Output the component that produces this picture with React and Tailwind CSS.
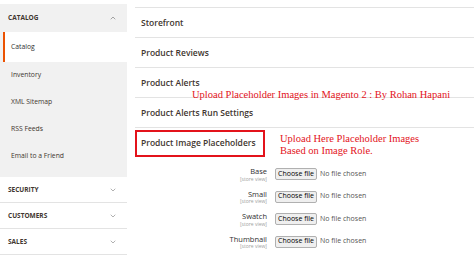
import { ChevronUp, ChevronDown } from "lucide-react";

const subItems = ["Inventory", "XML Sitemap", "RSS Feeds", "Email to a Friend"];
const groups = ["SECURITY", "CUSTOMERS", "SALES"];
const sections = ["Storefront", "Product Reviews", "Product Alerts", "Product Alerts Run Settings"];
const roles = ["Base", "Small", "Swatch", "Thumbnail"];

function App() {
  return (
    <div className="flex w-[474px] h-[261px] overflow-hidden bg-white font-['Open_Sans',sans-serif] text-[#303030] relative">
      {/* sidebar */}
      <aside className="w-[127px] shrink-0 flex flex-col bg-white">
        <div className="h-[4px] bg-white" />
        <div className="bg-[#f1f1f1] pb-[7px]">
          <div className="h-[28px] flex items-center justify-between pl-[8px] pr-[10px]">
            <span className="text-[6.5px] font-bold text-[#41362f]">CATALOG</span>
            <ChevronUp size={8} strokeWidth={2} className="text-[#7a7a7a]" />
          </div>
          <div className="ml-[3px] h-[30px] bg-white border-l-2 border-[#eb5202] flex items-center pl-[6px] text-[6.8px] text-[#303030]">
            Catalog
          </div>
          {subItems.map((s) => (
            <div key={s} className="h-[27px] flex items-center pl-[11px] text-[6.8px] text-[#41362f]">
              {s}
            </div>
          ))}
        </div>
        {groups.map((g) => (
          <div key={g} className="h-[26px] border-b border-[#e3e3e3] flex items-center justify-between pl-[8px] pr-[10px]">
            <span className="text-[6.5px] font-bold text-[#41362f]">{g}</span>
            <ChevronDown size={8} strokeWidth={2} className="text-[#8a8a8a]" />
          </div>
        ))}
      </aside>

      {/* content */}
      <main className="flex-1 ml-[8px] flex flex-col">
        <div className="h-[8px] border-b border-[#e3e3e3]" />
        {sections.map((s) => (
          <div key={s} className="h-[30px] border-b border-[#e3e3e3] flex items-center pl-[6px] pt-[2px] text-[8.5px] font-semibold text-[#41362f]">
            {s}
          </div>
        ))}
        <div className="flex items-start mt-[2px]">
          <div className="w-[130px] h-[27px] border-2 border-[#e3131b] flex items-center pl-[4px] text-[8.5px] font-semibold text-[#41362f]">
            Product Image Placeholders
          </div>
          <div className="ml-[15px] mt-[3px] font-['Liberation_Serif',serif] text-[10.5px] leading-[12px] text-[#e3131b]">
            <div>Upload Here Placeholder Images</div>
            <div>Based on Image Role.</div>
          </div>
        </div>
        <div className="flex flex-col gap-[9px] mt-[11px]">
          {roles.map((r) => (
            <div key={r} className="flex items-start">
              <div className="w-[132px] flex flex-col items-end leading-none">
                <span className="text-[7.5px] text-[#303030]">{r}</span>
                <span className="text-[5px] text-[#a0a0a0] mt-[1px]">[store view]</span>
              </div>
              <div className="ml-[8px] flex items-center">
                <span className="h-[12px] w-[42px] flex items-center justify-center bg-[#efefef] border border-[#b0b0b0] rounded-[2px] text-[7px] text-black">
                  Choose file
                </span>
                <span className="ml-[3px] text-[7px] text-[#555]">No file chosen</span>
              </div>
            </div>
          ))}
        </div>
      </main>

      {/* annotation over the list */}
      <div className="absolute left-[192px] top-[90px] font-['Liberation_Serif',serif] text-[10.5px] leading-none text-[#e3131b] whitespace-nowrap">
        Upload Placeholder Images in Magento 2 : By Rohan Hapani
      </div>
    </div>
  );
}

export default App;
